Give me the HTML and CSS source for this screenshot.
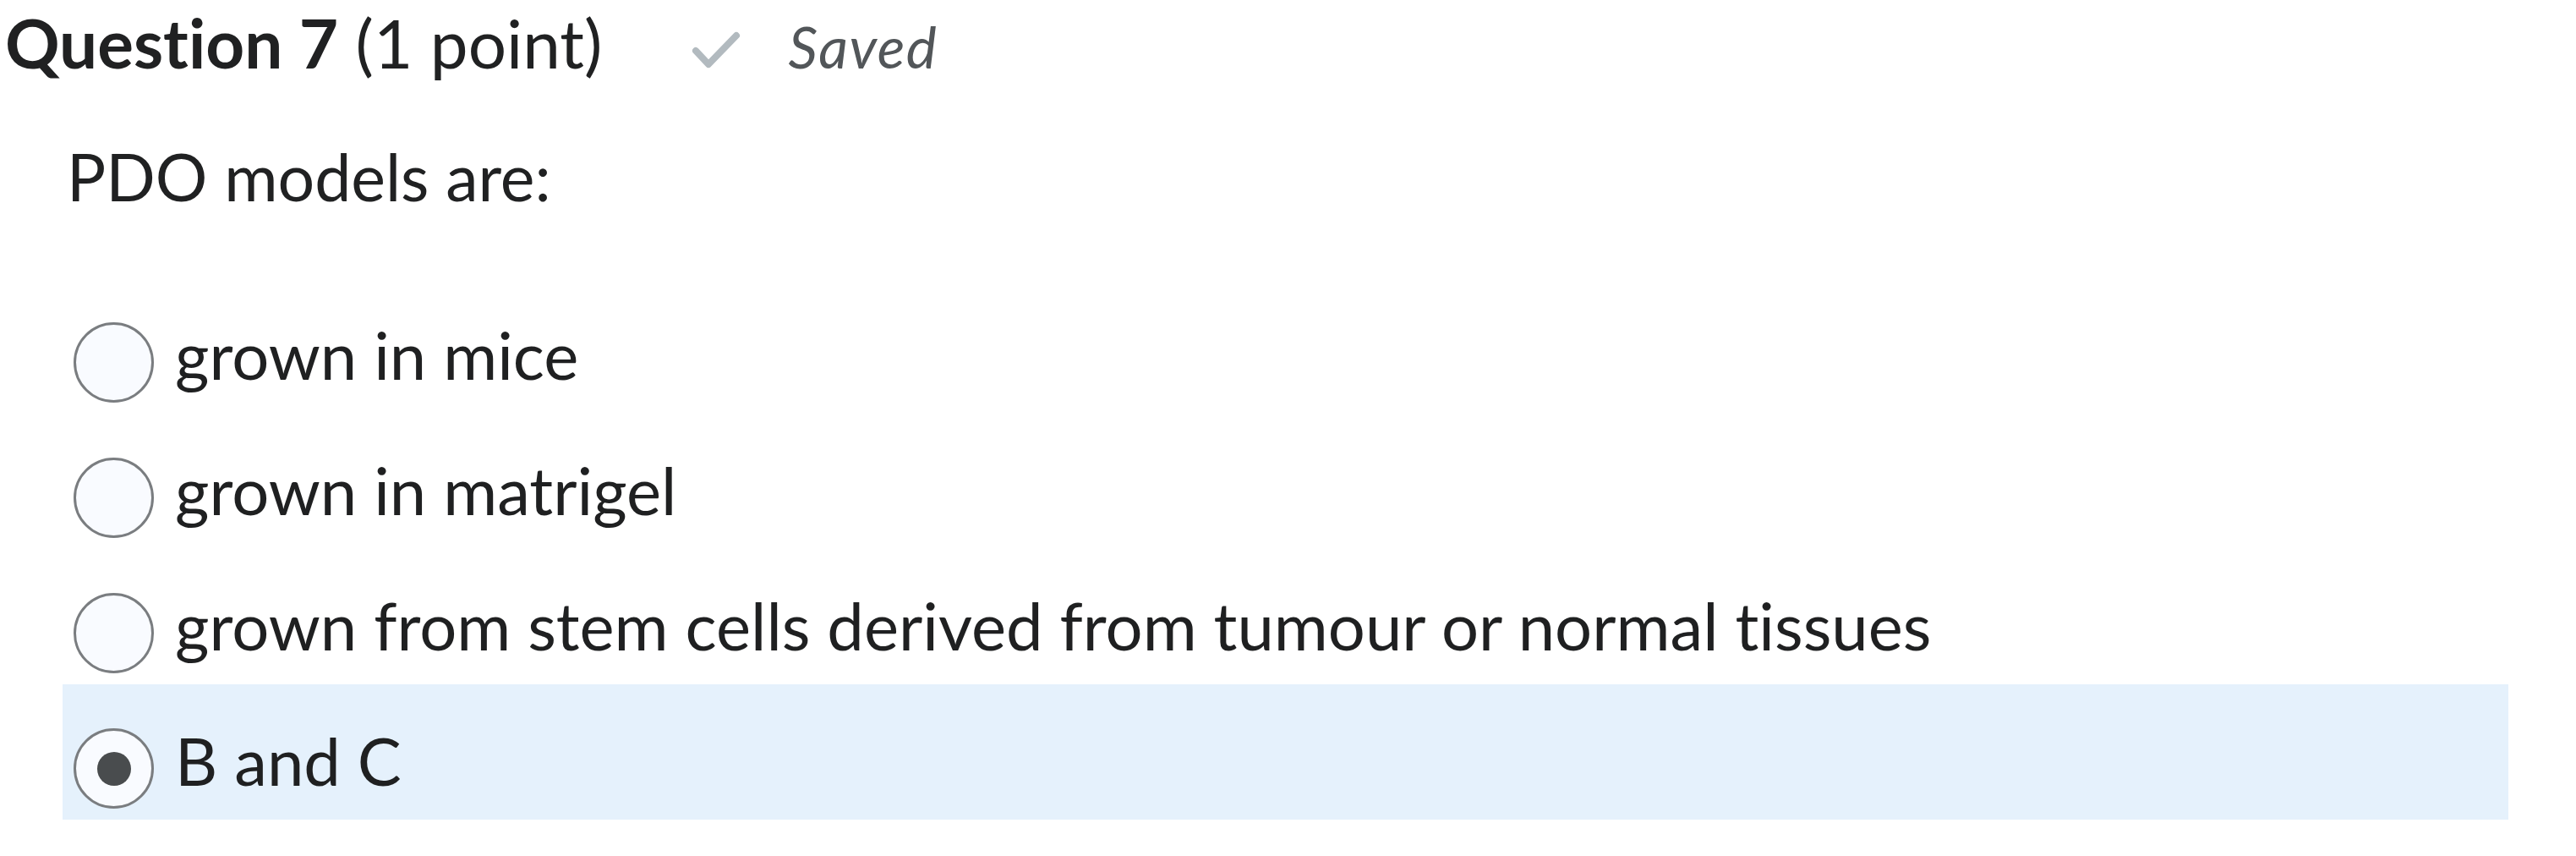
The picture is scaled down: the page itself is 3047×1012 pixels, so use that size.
FILE: index.html
```html
<!DOCTYPE html>
<html lang="en">
<head>
<meta charset="utf-8">
<title>Question 7</title>
<link rel="stylesheet" href="styles.css">
</head>
<body>
<div class="quiz">
  <div class="q-header">
    <h2 class="q-title"><strong>Question 7</strong> <span class="q-points">(1 point)</span></h2>
    <div class="q-status">
      <svg class="check" viewBox="0 0 58 44" width="58" height="44" aria-hidden="true">
        <path d="M5 23 L20 39 L53 5" fill="none" stroke="#b2babf" stroke-width="8" stroke-linecap="round" stroke-linejoin="round"/>
      </svg>
      <span class="saved">Saved</span>
    </div>
  </div>
  <p class="q-text">PDO models are:</p>
  <ul class="options">
    <li class="option"><span class="radio"></span><span class="opt-label">grown in mice</span></li>
    <li class="option"><span class="radio"></span><span class="opt-label">grown in matrigel</span></li>
    <li class="option"><span class="radio"></span><span class="opt-label">grown from stem cells derived from tumour or normal tissues</span></li>
    <li class="option selected"><span class="radio checked"></span><span class="opt-label">B and C</span></li>
  </ul>
</div>
</body>
</html>
```
FILE: styles.css
```css
html, body {
  margin: 0;
  padding: 0;
  background: #ffffff;
}
body {
  font-family: Lato, "Open Sans", "Liberation Sans", sans-serif;
  color: #202122;
  font-variant-ligatures: none;
  font-feature-settings: "liga" 0, "clig" 0;
}
.quiz {
  width: 2967px;
  padding-top: 2px;
}
.q-header {
  display: flex;
  align-items: baseline;
  padding-left: 6px;
}
.q-title {
  margin: 0;
  font-size: 80px;
  line-height: 96px;
  font-weight: 400;
  color: #202122;
}
.q-title strong {
  font-weight: 700;
}
.q-status {
  display: flex;
  align-items: baseline;
  margin-left: 106px;
}
.check {
  align-self: center;
  margin-right: 56px;
  position: relative;
  top: 4px;
}
.saved {
  font-size: 68px;
  font-style: italic;
  letter-spacing: 1.5px;
  color: #525659;
}
.q-text {
  margin: 64px 0 0 79px;
  font-size: 77px;
  line-height: 92px;
}
.options {
  list-style: none;
  margin: 75px 0 0 74px;
  padding: 0;
}
.option {
  display: flex;
  align-items: flex-start;
  height: 160px;
  box-sizing: border-box;
  padding: 52px 0 0 13px;
}
.option.selected {
  background: #e5f1fc;
}
.radio {
  flex: none;
  width: 95px;
  height: 95px;
  box-sizing: border-box;
  border: 3px solid #7a7d80;
  border-radius: 50%;
  background: #f9fbff;
  display: flex;
  align-items: center;
  justify-content: center;
}
.radio.checked::after {
  content: "";
  width: 40px;
  height: 40px;
  border-radius: 50%;
  background: #494c4e;
}
.opt-label {
  margin-left: 25px;
  font-size: 77.8px;
  line-height: 77px;
  color: #1f2021;
}
```
